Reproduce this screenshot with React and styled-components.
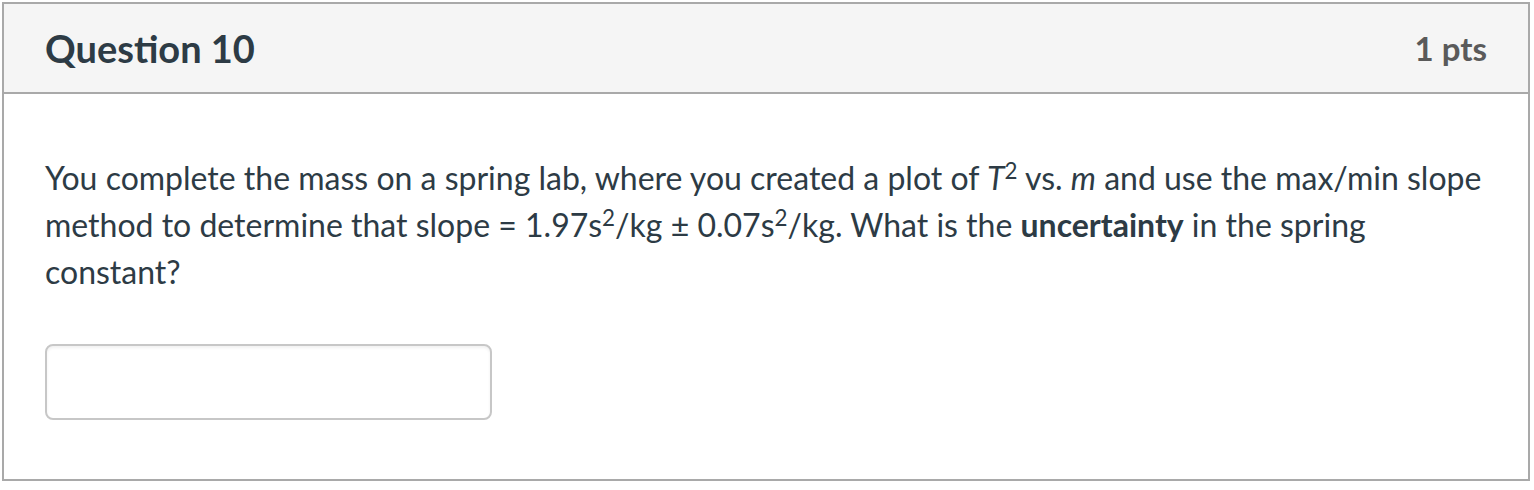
import styled, { createGlobalStyle } from "styled-components";

const GlobalStyle = createGlobalStyle`
  body {
    margin: 0;
    background: #ffffff;
    font-family: Lato, "Open Sans", sans-serif;
  }
`;

const Page = styled.div`
  padding: 2px 4px 0 2px;
`;

const Card = styled.section`
  border: 2px solid #a9a9a9;
  background: #fff;
`;

const Header = styled.header`
  display: flex;
  align-items: center;
  justify-content: space-between;
  height: 88px;
  padding: 0 41px;
  background: #f5f5f5;
  border-bottom: 2px solid #a9a9a9;
`;

const Title = styled.h2`
  margin: 0;
  font-size: 38px;
  font-weight: 700;
  color: #2d3b45;
`;

const Points = styled.span`
  font-size: 33px;
  font-weight: 700;
  color: #5a5a5a;
`;

const Body = styled.div`
  padding: 60px 41px 59px;
`;

const Prompt = styled.p`
  margin: 0;
  font-size: 32px;
  line-height: 47px;
  color: #2d3b45;

  sup {
    font-size: 0.7em;
    line-height: 0;
    vertical-align: 0.5em;
  }

  strong {
    font-weight: 700;
  }
`;

const Answer = styled.input`
  display: block;
  box-sizing: border-box;
  width: 447px;
  height: 76px;
  margin-top: 49px;
  border: 2px solid #c7c7c7;
  border-radius: 8px;
  box-shadow: inset 0 2px 3px rgba(0, 0, 0, 0.06);
  background: #fff;
  font: inherit;
  font-size: 30px;
  padding: 0 14px;
  outline: none;
`;

export default function App() {
  return (
    <Page>
      <GlobalStyle />
      <Card>
        <Header>
          <Title>Question 10</Title>
          <Points>1 pts</Points>
        </Header>
        <Body>
          <Prompt>
            You complete the mass on a spring lab, where you created a plot of{" "}
            <em>T</em>
            <sup>2</sup> vs. <em>m</em> and use the max/min slope method to
            determine that slope = 1.97s<sup>2</sup>/kg ± 0.07s<sup>2</sup>/kg.
            What is the <strong>uncertainty</strong> in the spring constant?
          </Prompt>
          <Answer type="text" aria-label="Answer" />
        </Body>
      </Card>
    </Page>
  );
}
